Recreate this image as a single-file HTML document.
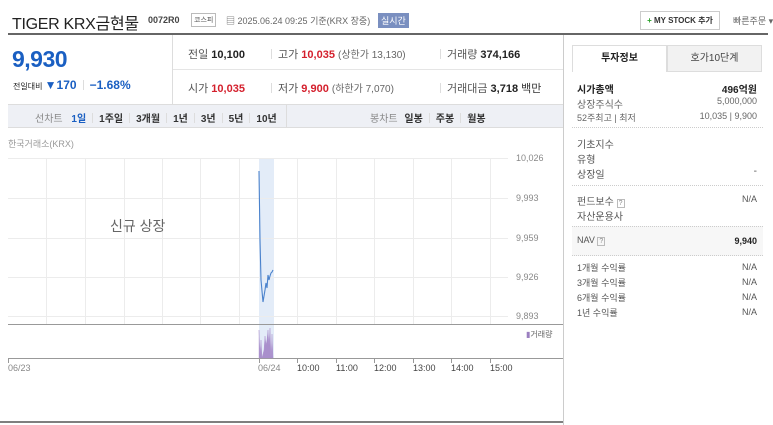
<!DOCTYPE html><html><head><meta charset="utf-8"><style>
*{margin:0;padding:0;box-sizing:border-box}
body{width:773px;height:425px;background:#fff;font-family:"Liberation Sans","Noto Sans CJK KR",sans-serif;color:#333;position:relative;overflow:hidden;font-size:11px}
.a{position:absolute;white-space:nowrap}
.g{color:#888}.r{color:#d4202d}.b{font-weight:bold}
.bl{color:#1a5fc2}
.vs{display:inline-block;width:1px;height:10px;background:#ddd;margin:0 6px;vertical-align:-1px}
</style></head><body>
<div class="a" style="left:12px;top:10px;font-size:16px;color:#222;letter-spacing:-0.3px">TIGER KRX금현물</div>
<div class="a b" style="left:148px;top:15px;font-size:9px;color:#444">0072R0</div>
<div class="a" style="left:191px;top:13px;font-size:7px;border:1px solid #bbb;padding:1px 2px;color:#555">코스피</div>
<div class="a" style="left:226px;top:14px;font-size:9px;color:#666">▤ 2025.06.24 09:25 기준(KRX 장중)</div>
<div class="a" style="left:378px;top:13px;font-size:9px;background:#7a8fc0;color:#fff;padding:1px 3px">실시간</div>
<div class="a" style="left:640px;top:11px;width:80px;height:19px;border:1px solid #ccc;font-size:8px;font-weight:bold;text-align:center;line-height:17px;color:#333"><span style="color:#2aa02a">+</span> MY STOCK 추가</div>
<div class="a" style="left:733px;top:14px;font-size:9px;color:#666">빠른주문 ▾</div>
<div class="a" style="left:8px;top:33px;width:760px;height:2px;background:#666"></div>
<div class="a" style="left:8px;top:35px;width:165px;height:69px;border-right:1px solid #ddd"></div>
<div class="a b bl" style="left:12px;top:46px;font-size:23px;letter-spacing:-0.5px">9,930</div>
<div class="a" style="left:13px;top:78px;font-size:8px;color:#222">전일대비 <span class="bl b" style="font-size:12px">▼170</span><span class="vs"></span><span class="bl b" style="font-size:12px">−1.68%</span></div>
<div class="a" style="left:173px;top:69px;width:391px;height:1px;background:#e5e5e5"></div>
<div class="a" style="left:188px;top:46px;font-size:11px;color:#555">전일 <b style="color:#222">10,100</b></div>
<div class="a" style="left:271px;top:46px;font-size:11px;color:#555"><span class="vs" style="margin-left:0"></span>고가 <b class="r">10,035</b> <span style="font-size:10px;color:#666">(상한가 13,130)</span></div>
<div class="a" style="left:440px;top:46px;font-size:11px;color:#555"><span class="vs" style="margin-left:0"></span>거래량 <b style="color:#222">374,166</b></div>
<div class="a" style="left:188px;top:80px;font-size:11px;color:#555">시가 <b class="r">10,035</b></div>
<div class="a" style="left:271px;top:80px;font-size:11px;color:#555"><span class="vs" style="margin-left:0"></span>저가 <b class="r">9,900</b> <span style="font-size:10px;color:#666">(하한가 7,070)</span></div>
<div class="a" style="left:440px;top:80px;font-size:11px;color:#555"><span class="vs" style="margin-left:0"></span>거래대금 <b style="color:#222">3,718</b> <span style="color:#333">백만</span></div>
<div class="a" style="left:8px;top:104px;width:556px;height:24px;background:#eef0f5;border-top:1px solid #ddd;border-bottom:1px solid #ddd"></div>
<div class="a" style="left:286px;top:104px;width:1px;height:24px;background:#ddd"></div>
<div class="a" style="left:35px;top:110px;font-size:10px;color:#888">선차트 <span style="margin-left:6px;color:#1a5fc2;font-weight:bold">1일</span><span class="vs"></span><b style="color:#333">1주일</b><span class="vs"></span><b style="color:#333">3개월</b><span class="vs"></span><b style="color:#333">1년</b><span class="vs"></span><b style="color:#333">3년</b><span class="vs"></span><b style="color:#333">5년</b><span class="vs"></span><b style="color:#333">10년</b></div>
<div class="a" style="left:370px;top:110px;font-size:10px;color:#888">봉차트 <b style="color:#333;margin-left:4px">일봉</b><span class="vs"></span><b style="color:#333">주봉</b><span class="vs"></span><b style="color:#333">월봉</b></div>
<div class="a" style="left:8px;top:137px;font-size:9px;color:#999">한국거래소(KRX)</div>
<svg class="a" style="left:0;top:0" width="564" height="425">
<rect x="259" y="158" width="15" height="200" fill="#e3ecf8"/>
<g stroke="#ececec" stroke-width="1">
<line x1="8" y1="158.5" x2="508" y2="158.5"/><line x1="8" y1="198.5" x2="508" y2="198.5"/><line x1="8" y1="238.5" x2="508" y2="238.5"/><line x1="8" y1="277.5" x2="508" y2="277.5"/><line x1="8" y1="316.5" x2="508" y2="316.5"/>
<line x1="46.5" y1="158" x2="46.5" y2="324"/><line x1="85.5" y1="158" x2="85.5" y2="324"/><line x1="124.5" y1="158" x2="124.5" y2="324"/><line x1="162.5" y1="158" x2="162.5" y2="324"/><line x1="200.5" y1="158" x2="200.5" y2="324"/><line x1="239.5" y1="158" x2="239.5" y2="324"/><line x1="297.5" y1="158" x2="297.5" y2="324"/><line x1="336.5" y1="158" x2="336.5" y2="324"/><line x1="374.5" y1="158" x2="374.5" y2="324"/><line x1="413.5" y1="158" x2="413.5" y2="324"/><line x1="451.5" y1="158" x2="451.5" y2="324"/><line x1="490.5" y1="158" x2="490.5" y2="324"/>
</g>
<line x1="8" y1="324.5" x2="564" y2="324.5" stroke="#999"/>
<line x1="8" y1="358.5" x2="564" y2="358.5" stroke="#999"/>
<line x1="8.5" y1="358" x2="8.5" y2="363" stroke="#999"/>
<g stroke="#999"><line x1="259.5" y1="358" x2="259.5" y2="363"/><line x1="297.5" y1="358" x2="297.5" y2="363"/><line x1="336.5" y1="358" x2="336.5" y2="363"/><line x1="374.5" y1="358" x2="374.5" y2="363"/><line x1="413.5" y1="358" x2="413.5" y2="363"/><line x1="451.5" y1="358" x2="451.5" y2="363"/><line x1="490.5" y1="358" x2="490.5" y2="363"/></g>
<polyline fill="none" stroke="#4a82cc" stroke-width="1.1" points="259,171 260,240 261,280 263,302 265,290 266,283 267,288 268,275 269,280 270,276 271,273 272,272 273,270"/>
<path d="M259 358V330L260 355L261 340L262 358L264 350L265 336L266 345L267 340L268 330L269 345L270 328L271 358L272 334L273 358Z" fill="#a98fcc" stroke="#a98fcc" stroke-width="0.4"/>
<line x1="0" y1="422" x2="564" y2="422" stroke="#555" stroke-width="1.5"/>
</svg>
<div class="a" style="left:110px;top:216px;font-size:14px;color:#666">신규 상장</div>
<div class="a g" style="left:516px;top:153px;font-size:9px">10,026</div>
<div class="a g" style="left:516px;top:193px;font-size:9px">9,993</div>
<div class="a g" style="left:516px;top:233px;font-size:9px">9,959</div>
<div class="a g" style="left:516px;top:272px;font-size:9px">9,926</div>
<div class="a g" style="left:516px;top:311px;font-size:9px">9,893</div>
<div class="a" style="left:526px;top:329px;font-size:8px;color:#666"><span style="color:#9b7fc0">▮</span>거래량</div>
<div class="a g" style="left:8px;top:363px;font-size:9px">06/23</div>
<div class="a g" style="left:258px;top:363px;font-size:9px">06/24</div>
<div class="a" style="left:297px;top:363px;font-size:9px;color:#444">10:00</div>
<div class="a" style="left:336px;top:363px;font-size:9px;color:#444">11:00</div>
<div class="a" style="left:374px;top:363px;font-size:9px;color:#444">12:00</div>
<div class="a" style="left:413px;top:363px;font-size:9px;color:#444">13:00</div>
<div class="a" style="left:451px;top:363px;font-size:9px;color:#444">14:00</div>
<div class="a" style="left:490px;top:363px;font-size:9px;color:#444">15:00</div>
<div class="a" style="left:563px;top:35px;width:1px;height:390px;background:#ccc"></div>
<div class="a" style="left:572px;top:45px;width:95px;height:27px;border:1px solid #ddd;border-bottom:none;text-align:center;line-height:26px;font-size:10px;font-weight:bold;color:#222">투자정보</div>
<div class="a" style="left:667px;top:45px;width:95px;height:27px;border:1px solid #ddd;background:#f2f2f2;text-align:center;line-height:26px;font-size:10px;color:#444">호가10단계</div>
<div class="a b" style="left:577px;top:81px;font-size:10px;color:#222">시가총액</div><div class="a b" style="right:16px;top:81px;font-size:10px;color:#222">496억원</div>
<div class="a" style="left:577px;top:96px;font-size:10px;color:#666">상장주식수</div><div class="a" style="right:16px;top:96px;font-size:9px;color:#666">5,000,000</div>
<div class="a" style="left:577px;top:111px;font-size:9px;color:#666">52주최고 | 최저</div><div class="a" style="right:16px;top:111px;font-size:9px;color:#666">10,035 | 9,900</div>
<div class="a" style="left:572px;top:127px;width:191px;border-top:1px dotted #ccc"></div>
<div class="a" style="left:577px;top:136px;font-size:10px;color:#555">기초지수</div>
<div class="a" style="left:577px;top:151px;font-size:10px;color:#555">유형</div>
<div class="a" style="left:577px;top:166px;font-size:10px;color:#555">상장일</div><div class="a" style="right:16px;top:166px;font-size:10px;color:#555">-</div>
<div class="a" style="left:572px;top:185px;width:191px;border-top:1px dotted #ccc"></div>
<div class="a" style="left:577px;top:193px;font-size:10px;color:#555">펀드보수 <span style="font-size:7px;border:1px solid #bbb;padding:0 1px;color:#888">?</span></div><div class="a" style="right:16px;top:194px;font-size:9px;color:#555">N/A</div>
<div class="a" style="left:577px;top:208px;font-size:10px;color:#555">자산운용사</div>
<div class="a" style="left:572px;top:226px;width:191px;height:30px;background:#f7f7f7;border-top:1px dotted #ccc;border-bottom:1px dotted #ccc"></div>
<div class="a" style="left:577px;top:235px;font-size:9px;color:#555">NAV <span style="font-size:7px;border:1px solid #bbb;padding:0 1px;color:#888">?</span></div><div class="a b" style="right:16px;top:236px;font-size:9px;color:#222">9,940</div>
<div class="a" style="left:577px;top:261px;font-size:9px;color:#555">1개월 수익률</div><div class="a" style="right:16px;top:262px;font-size:9px;color:#555">N/A</div>
<div class="a" style="left:577px;top:276px;font-size:9px;color:#555">3개월 수익률</div><div class="a" style="right:16px;top:277px;font-size:9px;color:#555">N/A</div>
<div class="a" style="left:577px;top:291px;font-size:9px;color:#555">6개월 수익률</div><div class="a" style="right:16px;top:292px;font-size:9px;color:#555">N/A</div>
<div class="a" style="left:577px;top:306px;font-size:9px;color:#555">1년 수익률</div><div class="a" style="right:16px;top:307px;font-size:9px;color:#555">N/A</div>
</body></html>
